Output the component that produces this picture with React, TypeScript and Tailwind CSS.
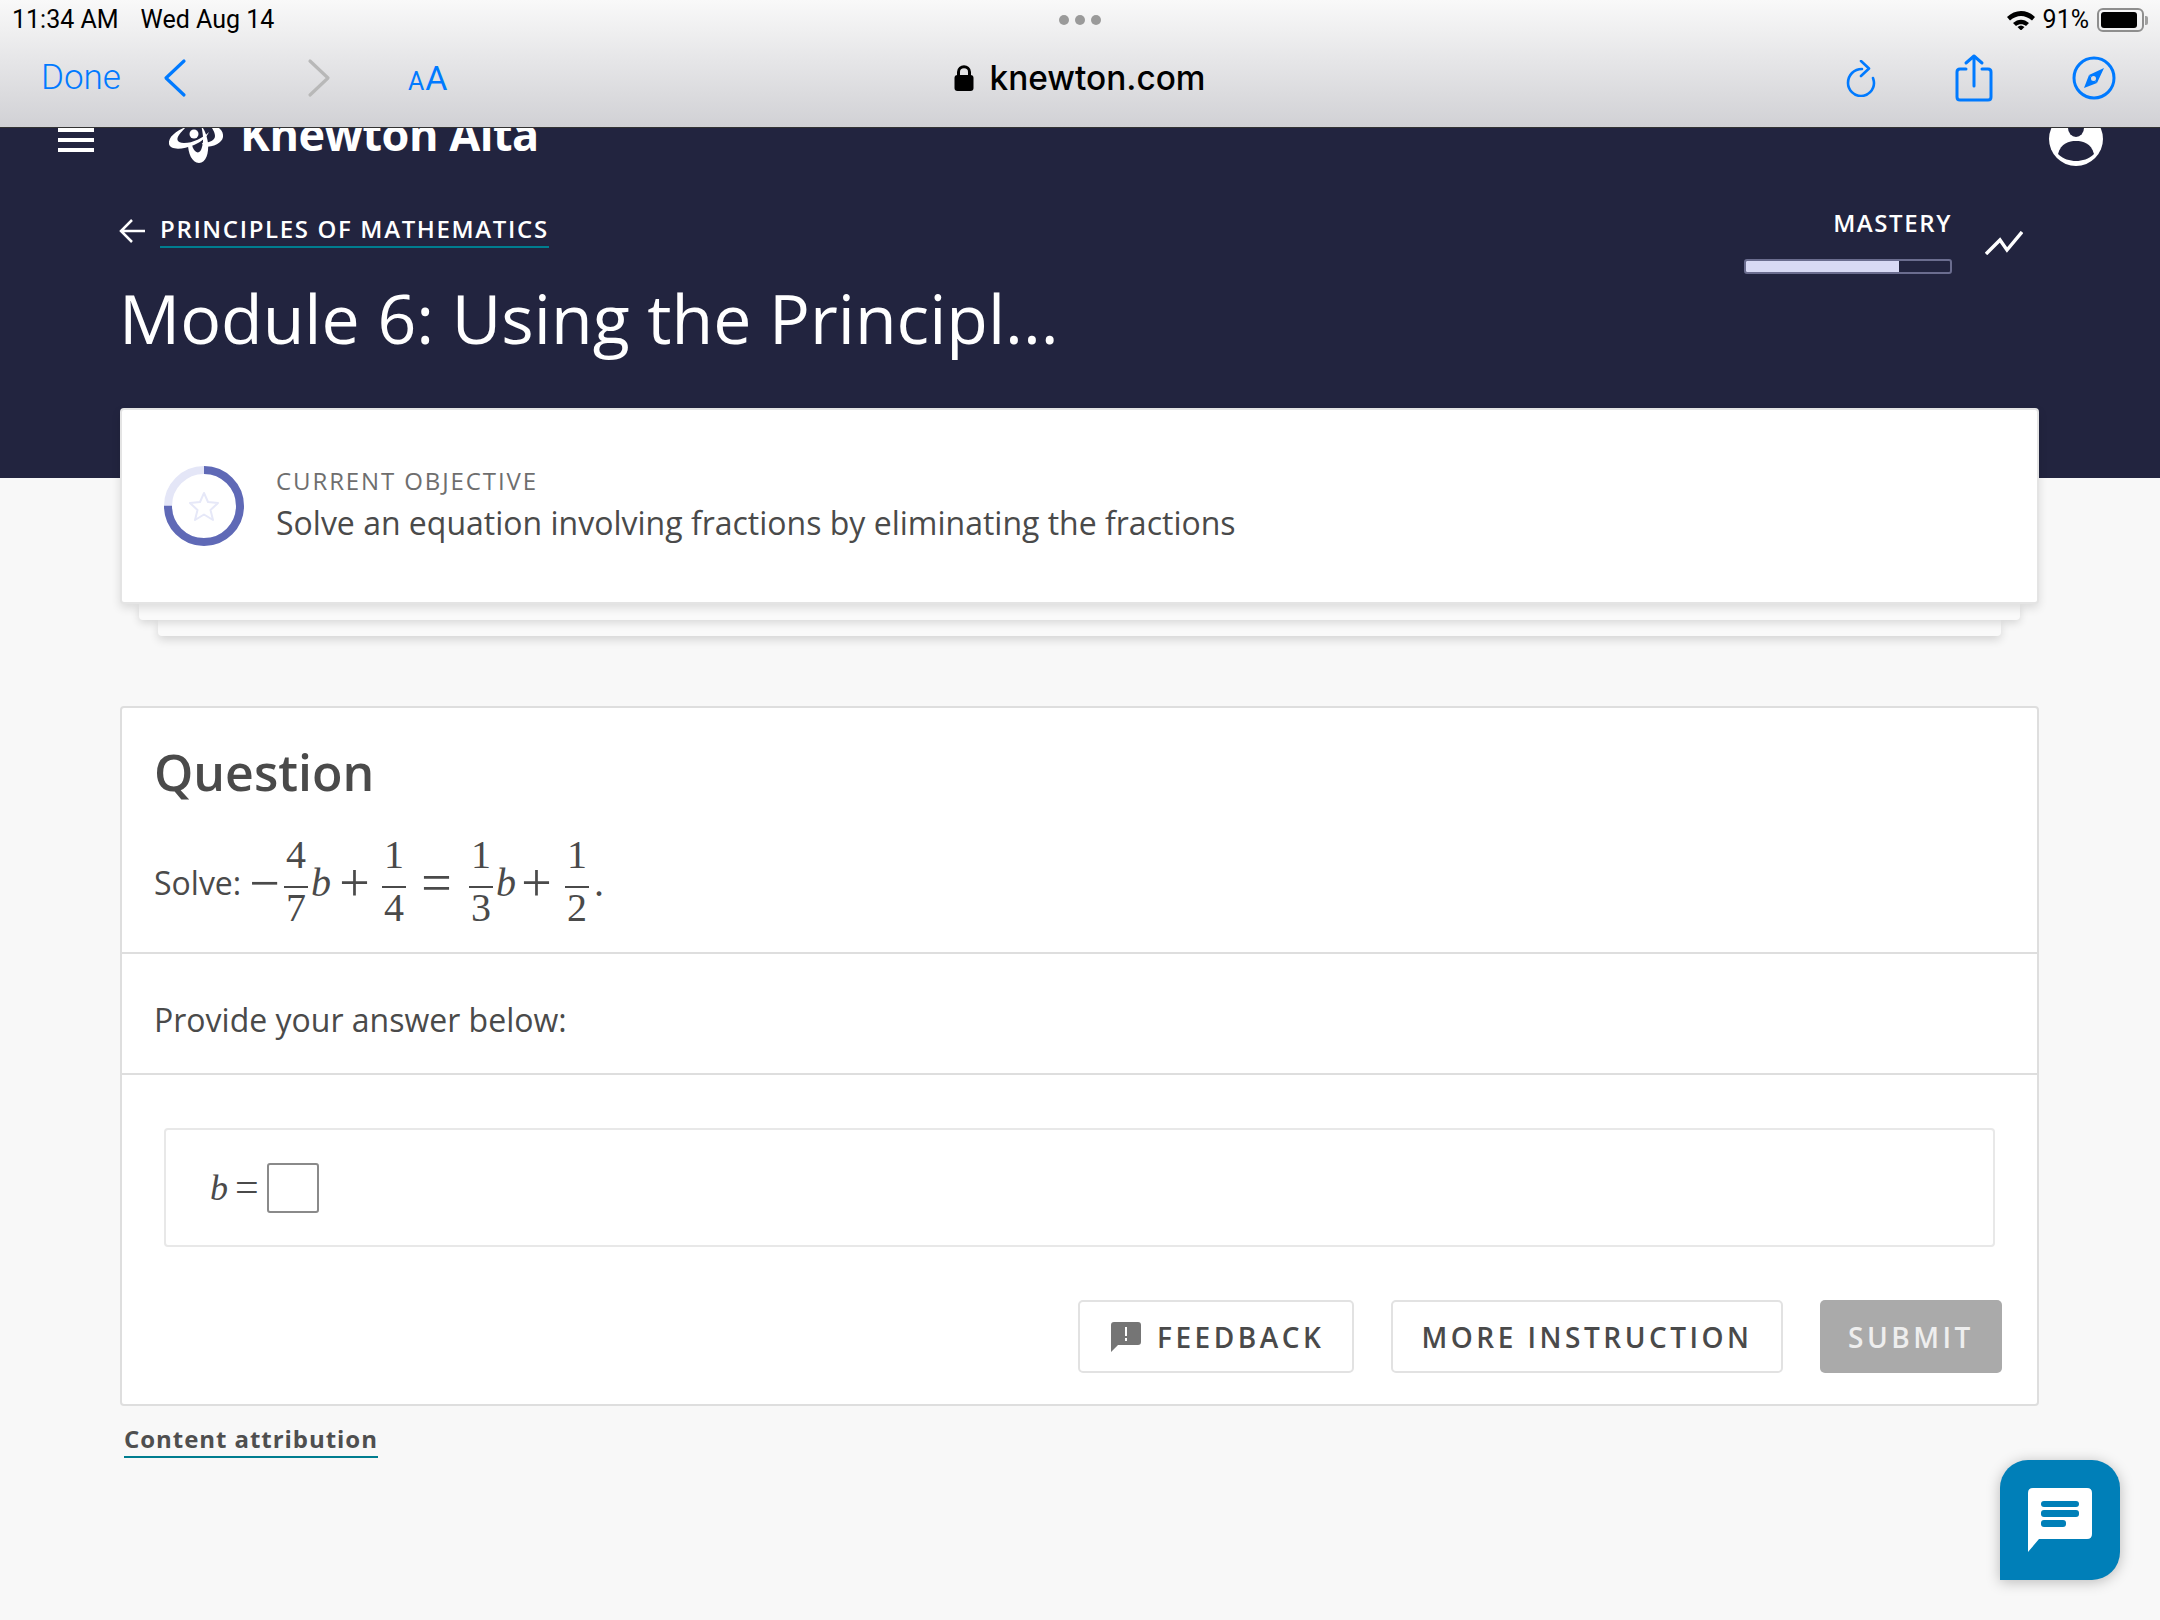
const openSans = "font-['Open_Sans',sans-serif]";
const mathFont = "font-['Liberation_Serif',serif]";

const Fraction = ({ top, bottom, className }: { top: string; bottom: string; className?: string }) => (
  <div className={`flex w-[24px] flex-col items-center text-[40px] leading-[40px] ${className ?? ""}`}>
    <div className="h-[52px] pt-[1px]">{top}</div>
    <div className="h-[2px] w-full bg-[#4a4a4a]" />
    <div className="h-[44px]">{bottom}</div>
  </div>
);

const Operator = ({ children, className }: { children: string; className?: string }) => (
  <div className={`flex w-[27px] justify-center text-[54px] font-light leading-[54px] ${className ?? ""}`}>{children}</div>
);

const Equation = () => (
  <div className={`flex items-center text-[#4a4a4a] ${mathFont}`}>
    <span className={`w-[97px] text-[32px] ${openSans}`}>Solve:</span>
    <Operator>−</Operator>
    <Fraction top="4" bottom="7" className="ml-[6px]" />
    <span className="ml-[3px] w-[17px] text-[40px] italic">b</span>
    <Operator className="ml-[13px]">+</Operator>
    <Fraction top="1" bottom="4" className="ml-[14px]" />
    <Operator className="ml-[17px]">=</Operator>
    <Fraction top="1" bottom="3" className="ml-[19px]" />
    <span className="ml-[3px] w-[17px] text-[40px] italic">b</span>
    <Operator className="ml-[10px]">+</Operator>
    <Fraction top="1" bottom="2" className="ml-[15px]" />
    <span className="ml-[5px] text-[40px]">.</span>
  </div>
);

const StatusBar = () => (
  <div className="grid h-[40px] grid-cols-[1fr_auto_1fr] items-center px-[12px] font-['Roboto',sans-serif] text-[25px] text-black">
    <div className="flex gap-[22px]">
      <span>11:34 AM</span>
      <span>Wed Aug 14</span>
    </div>
    <div className="flex gap-[6px]">
      <span className="h-[10px] w-[10px] rounded-full bg-[#9a9a9a]" />
      <span className="h-[10px] w-[10px] rounded-full bg-[#9a9a9a]" />
      <span className="h-[10px] w-[10px] rounded-full bg-[#9a9a9a]" />
    </div>
    <div className="flex items-center justify-end">
      <svg width="28" height="20" viewBox="0 0 28 20" className="mr-[8px]">
        <path d="M0 7 C8 -1 20 -1 28 7 L25 10.5 C18 4.5 10 4.5 3 10.5 Z" fill="#000" />
        <path d="M6 13 C11 8.5 17 8.5 22 13 L19 16 C16 13.5 12 13.5 9 16 Z" fill="#000" />
        <path d="M10.5 17 C13 15 15 15 17.5 17 L14 20.5 Z" fill="#000" />
      </svg>
      <span>91%</span>
      <div className="ml-[8px] flex h-[24px] w-[47px] items-center rounded-[6px] border-2 border-[#8e8e8e] p-[2px]">
        <div className="h-full w-[36px] rounded-[3px] bg-black" />
      </div>
      <div className="ml-[1px] h-[9px] w-[3px] rounded-r-[2px] bg-[#a0a0a0]" />
    </div>
  </div>
);

const BrowserBar = () => (
  <div className="grid h-[76px] grid-cols-[1fr_auto_1fr] items-center">
    <div className="flex items-center text-[#007aff]">
      <span className="ml-[41px] w-[80px] pt-[1px] font-['Roboto',sans-serif] text-[35px] font-light">Done</span>
      <svg width="24" height="40" viewBox="0 0 24 40" className="ml-[42px]" fill="none" stroke="#007aff" strokeWidth="3.2" strokeLinecap="round" strokeLinejoin="round">
        <path d="M21 3 L3 20 L21 37" />
      </svg>
      <svg width="24" height="40" viewBox="0 0 24 40" className="ml-[120px]" fill="none" stroke="#b8b8b8" strokeWidth="3.2" strokeLinecap="round" strokeLinejoin="round">
        <path d="M3 3 L21 20 L3 37" />
      </svg>
      <span className="ml-[77px] flex items-baseline gap-[1px] font-['Roboto',sans-serif]">
        <span className="text-[25px]">A</span>
        <span className="text-[34px]">A</span>
      </span>
    </div>
    <div className="flex items-center font-['Inter',sans-serif] text-[33.4px] font-medium text-black">
      <svg width="20" height="27" viewBox="0 0 20 27" className="mr-[15px]">
        <path d="M4.5 12 V8 C4.5 1 15.5 1 15.5 8 V12" fill="none" stroke="#000" strokeWidth="3" />
        <rect x="0.5" y="11" width="19" height="16" rx="3" fill="#000" />
      </svg>
      knewton.com
    </div>
    <div className="flex items-center justify-end">
      <svg width="30" height="37" viewBox="0 0 30 37" fill="none" stroke="#007aff" strokeWidth="2.6" strokeLinecap="round" strokeLinejoin="round">
        <path d="M16 9 C8 9 2 15 2 23 C2 30 8 36 15 36 C22 36 28 30 28 23 C28 21 27.5 20 27 18" />
        <path d="M15 1 L23 8.5 L15 16" />
      </svg>
      <svg width="38" height="48" viewBox="0 0 38 48" className="ml-[79px]" fill="none" stroke="#007aff" strokeWidth="3" strokeLinecap="round" strokeLinejoin="round">
        <path d="M11 15 H5 Q2 15 2 18 V43 Q2 46 5 46 H33 Q36 46 36 43 V18 Q36 15 33 15 H27" />
        <path d="M19 32 V2 M11 9 L19 2 L27 9" />
      </svg>
      <svg width="44" height="44" viewBox="0 0 44 44" className="ml-[79px] mr-[44px]">
        <circle cx="22" cy="22" r="20" fill="none" stroke="#007aff" strokeWidth="3" />
        <path d="M32 12 L25 27 L17 19 Z" fill="#007aff" />
        <path d="M12 32 L17 19 L25 27 Z" fill="#007aff" />
        <circle cx="21.5" cy="22.5" r="2.5" fill="#dcdce0" />
      </svg>
    </div>
  </div>
);

// swirl mark, only its lower part shows under the browser bar
const Logo = () => (
  <svg width="56" height="46" viewBox="0 0 56 46" fill="#fff">
    <circle cx="26" cy="17" r="4.5" />
    <path d="M18 10 C8 14 0 20 1 27 C2 33 14 33 26 28 C33 25 39 20 41 15 C35 21 25 26 16 26 C9 26 8 22 11 18 C13 15 16 12 18 10 Z" />
    <path d="M20 27 C20 36 24 46 31 46 C38 46 41 36 40 26 C39 18 36 12 33 8 C35 16 36 24 34 30 C33 35 30 37 27 34 C25 32 24 29 24 26 Z" />
    <path d="M42 8 C50 8 56 14 55 20 C54 26 46 30 36 30 L34 26 C42 26 47 23 47 19 C47 15 44 11 42 8 Z" />
  </svg>
);

const Avatar = () => (
  <svg width="54" height="54" viewBox="0 0 54 54">
    <circle cx="27" cy="27" r="27" fill="#fff" />
    <ellipse cx="27" cy="16" rx="8" ry="9" fill="#22243f" />
    <path d="M9 42 C12 31 20 29 27 29 C34 29 42 31 45 42 C40 47 33 49 27 49 C21 49 14 47 9 42 Z" fill="#22243f" />
  </svg>
);

const Header = () => (
  <div className={`h-[350px] bg-[#22243f] text-white ${openSans}`}>
    <div className="flex h-[41px] items-start">
      <div className="ml-[58px] flex w-[36px] flex-col gap-[6px]">
        <div className="h-[4px] bg-white" />
        <div className="h-[4px] bg-white" />
        <div className="h-[4px] bg-white" />
      </div>
      <div className="ml-[74px] -mt-[11px]">
        <Logo />
      </div>
      <span className="-mt-[24px] ml-[16px] text-[45px] font-bold leading-[60px] tracking-[-0.5px]">Knewton Alta</span>
      <div className="ml-auto mr-[57px] -mt-[16px]">
        <Avatar />
      </div>
    </div>
    <div className="mt-[44px] flex items-start justify-between pl-[119px] pr-[137px]">
      <div>
        <div className="flex items-center">
          <svg width="26" height="24" viewBox="0 0 26 24" fill="none" stroke="#fff" strokeWidth="2.5">
            <path d="M26 12 H2 M13 1 L2 12 L13 23" />
          </svg>
          <span className="ml-[15px] border-b-2 border-[#007d8f] pb-[1px] text-[24px] font-semibold leading-[32px] tracking-[1.65px]">PRINCIPLES OF MATHEMATICS</span>
        </div>
        <h1 className="mt-[25px] text-[68px] font-normal leading-[90px]">Module 6: Using the Principl...</h1>
      </div>
      <div className="flex items-start">
        <div className="flex w-[208px] flex-col items-end">
          <span className="-mt-[6px] text-[24px] font-semibold leading-[32px] tracking-[1.6px]">MASTERY</span>
          <div className="mt-[20px] h-[15px] w-full overflow-hidden rounded-[3px] border-2 border-[#6b6d8f]">
            <div className="h-full w-[75%] bg-[#d9daf5]" />
          </div>
        </div>
        <svg width="38" height="24" viewBox="0 0 38 24" className="ml-[33px] mt-[18px]" fill="none" stroke="#fff" strokeWidth="3.4">
          <path d="M1 23 L15 9 L22 19 L37 1" />
        </svg>
      </div>
    </div>
  </div>
);

const ObjectiveCard = () => (
  <div className="relative -mt-[70px] px-[120px] pr-[121px]">
    <div className="relative z-[3] flex h-[196px] items-center rounded-[4px] border-2 border-[#e4e4e4] bg-white pl-[42px] shadow-[0_4px_10px_rgba(0,0,0,0.12)]">
      <svg width="80" height="80" viewBox="0 0 80 80">
        <circle cx="40" cy="40" r="36" fill="none" stroke="#e4e6f7" strokeWidth="8" />
        <circle cx="40" cy="40" r="36" fill="none" stroke="#5f69b6" strokeWidth="8" strokeDasharray="169.6 226.2" transform="rotate(-90 40 40)" />
        <path d="M40 27 L44 36 L54 37 L46.5 44 L49 54 L40 48.5 L31 54 L33.5 44 L26 37 L36 36 Z" fill="none" stroke="#e6e8f8" strokeWidth="2" strokeLinejoin="round" />
      </svg>
      <div className={`ml-[32px] ${openSans}`}>
        <div className="-mt-[5px] text-[24px] leading-[34px] tracking-[1.9px] text-[#6e6e6e]">CURRENT OBJECTIVE</div>
        <div className="mt-[4px] text-[32px] leading-[42px] text-[#4a4a4a]">Solve an equation involving fractions by eliminating the fractions</div>
      </div>
    </div>
    <div className="relative z-[2] mx-[19px] h-[16px] rounded-b-[4px] bg-[#fafafa] shadow-[0_3px_8px_rgba(0,0,0,0.14)]" />
    <div className="relative z-[1] mx-[38px] h-[16px] rounded-b-[4px] bg-[#fafafa] shadow-[0_4px_10px_rgba(0,0,0,0.14)]" />
  </div>
);

const QuestionCard = () => (
  <div className={`mx-[120px] mr-[121px] mt-[70px] flex h-[700px] flex-col rounded-[4px] border-2 border-[#dedede] bg-white text-[#4a4a4a] ${openSans}`}>
    <div className="h-[246px] border-b-2 border-[#dedede] px-[32px] pt-[34px]">
      <h2 className="text-[50px] font-semibold leading-[60px]">Question</h2>
      <div className="mt-[32px]">
        <Equation />
      </div>
    </div>
    <div className="flex h-[121px] items-center border-b-2 border-[#dedede] px-[32px] pt-[12px] text-[32px]">Provide your answer below:</div>
    <div className="mx-[42px] mt-[53px] flex h-[119px] items-center rounded-[4px] border-2 border-[#e8e8e8] pl-[44px]">
      <span className={`text-[36px] italic ${mathFont}`}>b</span>
      <span className={`ml-[7px] text-[42px] font-light ${mathFont}`}>=</span>
      <div className="ml-[8px] h-[50px] w-[52px] rounded-[3px] border-2 border-[#8a8a8a]" />
    </div>
    <div className="mr-[35px] mt-[53px] flex justify-end gap-[37px] text-[28px] font-semibold leading-none tracking-[3.5px]">
      <button className="flex h-[73px] w-[276px] items-center rounded-[5px] border-2 border-[#e2e2e2] pl-[31px]">
        <svg width="30" height="30" viewBox="0 0 30 30">
          <path d="M3 0 H27 Q30 0 30 3 V20 Q30 23 27 23 H7 L0 30 V3 Q0 0 3 0 Z" fill="#757575" />
          <path d="M14 5 H16 V14 H14 Z M14 16 H16 V19 H14 Z" fill="#fff" />
        </svg>
        <span className="ml-[16px]">FEEDBACK</span>
      </button>
      <button className="h-[73px] w-[392px] rounded-[5px] border-2 border-[#e2e2e2]">MORE INSTRUCTION</button>
      <button className="h-[73px] w-[182px] rounded-[5px] bg-[#aaaaaa] text-[#eeeeee]">SUBMIT</button>
    </div>
  </div>
);

const ChatButton = () => (
  <div className="absolute bottom-[40px] right-[40px] flex h-[120px] w-[120px] items-center justify-center rounded-[28px] rounded-bl-none bg-[#007fb8] shadow-[0_2px_14px_rgba(0,0,0,0.25)]">
    <svg width="64" height="64" viewBox="0 0 64 64">
      <path d="M5 0 H59 Q64 0 64 5 V46 Q64 51 59 51 H11 L0 64 V5 Q0 0 5 0 Z" fill="#fff" />
      <rect x="13" y="13" width="38" height="6" rx="3" fill="#007fb8" />
      <rect x="13" y="22" width="38" height="7" rx="3" fill="#007fb8" />
      <rect x="13" y="32" width="25" height="7" rx="3" fill="#007fb8" />
    </svg>
  </div>
);

export default function App() {
  return (
    <div className="relative h-[1620px] w-[2160px] overflow-hidden bg-[#f8f8f8]">
      <div className="relative z-10 h-[128px] border-b border-[#333] bg-gradient-to-b from-[#f9f9f9] to-[#d1d1d5]">
        <StatusBar />
        <BrowserBar />
      </div>
      <Header />
      <ObjectiveCard />
      <QuestionCard />
      <div className={`ml-[124px] mt-[16px] inline-block border-b-2 border-[#007d8f] text-[24px] font-bold leading-[34px] tracking-[0.95px] text-[#4f4f4f] ${openSans}`}>
        Content attribution
      </div>
      <ChatButton />
    </div>
  );
}
